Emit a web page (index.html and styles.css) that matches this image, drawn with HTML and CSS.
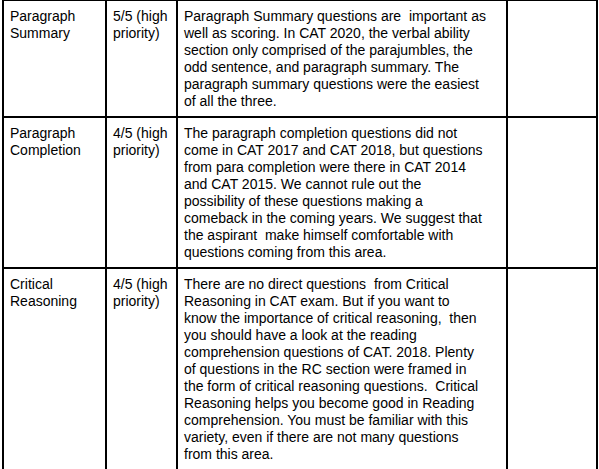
FILE: index.html
```html
<!DOCTYPE html>
<html>
<head>
<meta charset="utf-8">
<link rel="stylesheet" href="styles.css">
</head>
<body>
<table class="grid">
  <colgroup>
    <col class="c-topic">
    <col class="c-prio">
    <col class="c-desc">
    <col class="c-extra">
  </colgroup>
  <tr>
    <td>Paragraph<br>Summary</td>
    <td>5/5 (high<br>priority)</td>
    <td class="desc">Paragraph Summary questions are&nbsp; important as<br>well as scoring. In CAT 2020, the verbal ability<br>section only comprised of the parajumbles, the<br>odd sentence, and paragraph summary. The<br>paragraph summary questions were the easiest<br>of all the three.</td>
    <td></td>
  </tr>
  <tr>
    <td>Paragraph<br>Completion</td>
    <td>4/5 (high<br>priority)</td>
    <td class="desc">The paragraph completion questions did not<br>come in CAT 2017 and CAT 2018, but questions<br>from para completion were there in CAT 2014<br>and CAT 2015. We cannot rule out the<br>possibility of these questions making a<br>comeback in the coming years. We suggest that<br>the aspirant&nbsp; make himself comfortable with<br>questions coming from this area.</td>
    <td></td>
  </tr>
  <tr>
    <td>Critical<br>Reasoning</td>
    <td>4/5 (high<br>priority)</td>
    <td class="desc">There are no direct questions&nbsp; from Critical<br>Reasoning in CAT exam. But if you want to<br>know the importance of critical reasoning,&nbsp; then<br>you should have a look at the reading<br>comprehension questions of CAT. 2018. Plenty<br>of questions in the RC section were framed in<br>the form of critical reasoning questions.&nbsp; Critical<br>Reasoning helps you become good in Reading<br>comprehension. You must be familiar with this<br>variety, even if there are not many questions<br>from this area.</td>
    <td></td>
  </tr>
</table>
</body>
</html>
```

FILE: styles.css
```css
html, body {
  margin: 0;
  padding: 0;
  background: #ffffff;
}

body {
  font-family: "Liberation Sans", Arial, sans-serif;
  font-size: 14px;
  line-height: 17px;
  color: #000000;
}

.grid {
  margin: -1px 0 0 2px;
  border-collapse: separate;
  border-spacing: 0;
  table-layout: fixed;
  width: 596px;
  border-top: 2px solid #000;
  border-left: 2px solid #000;
}

.c-topic { width: 103px; }
.c-prio { width: 71px; }
.c-desc { width: 330px; }
.c-extra { width: 90px; }

.grid td {
  vertical-align: top;
  padding: 7px 6px 6px 6px;
  border-right: 2px solid #000;
  border-bottom: 2px solid #000;
  white-space: nowrap;
  overflow: hidden;
}
```
